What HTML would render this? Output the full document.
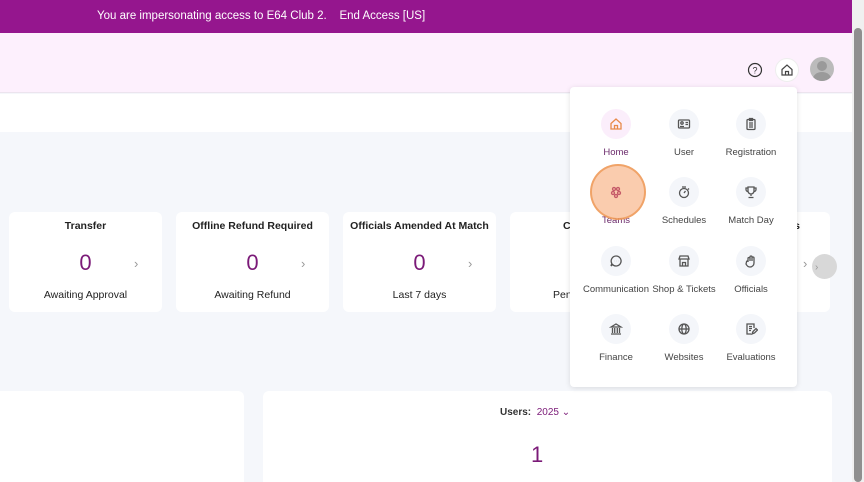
<!DOCTYPE html>
<html><head><meta charset="utf-8"><style>
*{margin:0;padding:0;box-sizing:border-box}
html,body{width:864px;height:482px;overflow:hidden}
body{background:#f5f7fb;font-family:"Liberation Sans",sans-serif;position:relative}
.top{position:absolute;left:0;top:0;width:852px;height:33px;background:#95168e;color:#fff;font-size:11.5px;line-height:33px}
.top span{position:absolute;left:97px;top:0}
.hdr{position:absolute;left:0;top:33px;width:852px;height:60px;background:#fdf0fd;border-bottom:1px solid #ece4ee}
.strip{position:absolute;left:0;top:94px;width:852px;height:38px;background:#fff}
.sb{position:absolute;left:852px;top:0;width:12px;height:482px;background:#f0f0f0}
.sb i{position:absolute;left:2px;top:28px;width:8px;height:454px;background:#8f8f8f;border-radius:4px}
.card{position:absolute;top:212px;height:100px;background:#fff;border-radius:6px;text-align:center}
.card .t{position:absolute;top:8px;width:100%;font-size:10.5px;font-weight:bold;color:#222}
.card .n{position:absolute;top:38px;width:100%;font-size:22px;color:#7b1a78}
.card .s{position:absolute;top:77px;width:100%;font-size:10.5px;color:#222}
.card .c{position:absolute;top:44px;left:125px;color:#999;font-size:13px}
.bc{position:absolute;top:391px;height:100px;background:#fff;border-radius:6px}
.dd{position:absolute;left:570px;top:87px;width:227px;height:300px;background:#fff;border-radius:4px;box-shadow:0 1px 6px rgba(0,0,0,.12)}
.it{position:absolute;width:76px;text-align:center;font-size:9.5px;color:#444}
.it .ic{width:30px;height:30px;border-radius:50%;background:#f4f6fa;margin:0 auto 8px;display:flex;align-items:center;justify-content:center}
.it svg{width:14px;height:14px;fill:none;stroke:#555;stroke-width:1.3}
</style></head><body>
<div class="top"><span>You are impersonating access to E64 Club 2.&nbsp;&nbsp;&nbsp;&nbsp;End Access [US]</span></div>
<div class="hdr">
<svg style="position:absolute;left:747px;top:29px" width="16" height="16" viewBox="0 0 16 16"><circle cx="8" cy="8" r="6.5" fill="none" stroke="#333" stroke-width="1.2"/><text x="8" y="11.5" font-size="9" text-anchor="middle" fill="#333" font-family="Liberation Sans">?</text></svg>
<div style="position:absolute;left:775px;top:25px;width:24px;height:24px;border-radius:50%;background:#fff;border:1px solid #eee"></div>
<svg style="position:absolute;left:780px;top:30px" width="14" height="14" viewBox="0 0 14 14"><path d="M2 6.5L7 2l5 4.5V12H2z M5.5 12V8.5h3V12" fill="none" stroke="#444" stroke-width="1.2"/></svg>
<div style="position:absolute;left:810px;top:24px;width:24px;height:24px;border-radius:50%;background:#bbb;overflow:hidden"><div style="position:absolute;left:7px;top:4px;width:10px;height:10px;border-radius:50%;background:#9a9a9a"></div><div style="position:absolute;left:3px;top:15px;width:18px;height:14px;border-radius:50%;background:#9a9a9a"></div></div>
</div>
<div class="strip"></div>
<div class="card" style="left:9px;width:153px"><div class="t">Transfer</div><div class="n">0</div><div class="c">›</div><div class="s">Awaiting Approval</div></div>
<div class="card" style="left:176px;width:153px"><div class="t">Offline Refund Required</div><div class="n">0</div><div class="c">›</div><div class="s">Awaiting Refund</div></div>
<div class="card" style="left:343px;width:153px"><div class="t">Officials Amended At Match</div><div class="n">0</div><div class="c">›</div><div class="s">Last 7 days</div></div>
<div class="card" style="left:510px;width:320px"><div class="t" style="text-align:left;left:53px">C</div><div class="s" style="text-align:left;left:43px">Pen</div><div class="c" style="left:293px">›</div><div class="t" style="left:282px;width:10px">s</div></div>
<div style="position:absolute;left:812px;top:254px;width:25px;height:25px;border-radius:50%;background:#d8d8d8;color:#999;font-size:10px;line-height:27px;padding-left:3px">›</div>
<div class="bc" style="left:-10px;width:254px"></div>
<div class="bc" style="left:263px;width:569px"><div style="position:absolute;left:237px;top:16px;font-size:10px;color:#333"><b>Users:</b>&nbsp; <span style="color:#7b1a78">2025 ⌄</span></div><div style="position:absolute;left:268px;top:51px;font-size:22px;color:#7b1a78">1</div></div>
<div class="dd">
<div class="it" style="left:8px;top:22px"><div class="ic" style="background:#fbeefb"><svg viewBox="0 0 14 14" style="stroke:#e88a4a"><path d="M2 6.5L7 2l5 4.5V12H2z M5.5 12V8.5h3V12"/></svg></div><span style="color:#6b2a6b">Home</span></div>
<div class="it" style="left:76px;top:22px"><div class="ic"><svg viewBox="0 0 14 14"><rect x="1.5" y="3" width="11" height="8" rx="1"/><circle cx="5" cy="6" r="1.2"/><path d="M3 9.5h4M8.5 5.5h2.5M8.5 7.5h2.5"/></svg></div>User</div>
<div class="it" style="left:143px;top:22px"><div class="ic"><svg viewBox="0 0 14 14"><rect x="3" y="2.5" width="8" height="10" rx="1"/><path d="M5.5 1.5h3v2h-3zM5 6h4M5 8h4M5 10h4"/></svg></div>Registration</div>
<div class="it" style="left:8px;top:90px"><div class="ic" style="background:transparent"><svg viewBox="0 0 14 14" style="stroke:#c45a6a"><circle cx="5" cy="4" r="1.5"/><circle cx="9" cy="4" r="1.5"/><circle cx="4" cy="8" r="1.5"/><circle cx="10" cy="8" r="1.5"/><circle cx="7" cy="11" r="1.5"/></svg></div><span style="color:#6b2a6b">Teams</span></div>
<div class="it" style="left:76px;top:90px"><div class="ic"><svg viewBox="0 0 14 14"><circle cx="7" cy="8" r="4.5"/><path d="M7 8L8.5 6M5 2h4M11 3.5l1 1"/></svg></div>Schedules</div>
<div class="it" style="left:143px;top:90px"><div class="ic"><svg viewBox="0 0 14 14"><path d="M4 2h6v4a3 3 0 01-6 0zM4 3H2v1.5a2 2 0 002 2M10 3h2v1.5a2 2 0 01-2 2M7 9v2M4.5 12.5h5"/></svg></div>Match Day</div>
<div class="it" style="left:6px;top:159px;width:80px"><div class="ic"><svg viewBox="0 0 14 14"><path d="M7 2a5 5 0 11-3.5 8.5L2 12l.8-2.6A5 5 0 017 2z"/><path d="M5 7h.1M7 7h.1M9 7h.1"/></svg></div>Communication</div>
<div class="it" style="left:74px;top:159px;width:80px"><div class="ic"><svg viewBox="0 0 14 14"><path d="M2 5l1-3h8l1 3zM2 5h10M3 5v7h8V5M5.5 12V8.5h3V12"/></svg></div>Shop &amp; Tickets</div>
<div class="it" style="left:143px;top:159px"><div class="ic"><svg viewBox="0 0 14 14"><path d="M4 8V4.5a1 1 0 012 0V7V3a1 1 0 012 0v4V4a1 1 0 012 0v5a4 4 0 01-4 4c-2 0-3-1-4-3L2.5 8a1 1 0 011.5-1"/></svg></div>Officials</div>
<div class="it" style="left:8px;top:227px"><div class="ic"><svg viewBox="0 0 14 14"><path d="M2 5l5-3 5 3zM2 12h10M3.5 6v5M5.7 6v5M8.3 6v5M10.5 6v5"/></svg></div>Finance</div>
<div class="it" style="left:76px;top:227px"><div class="ic"><svg viewBox="0 0 14 14"><circle cx="7" cy="7" r="5"/><ellipse cx="7" cy="7" rx="2.2" ry="5"/><path d="M2 7h10"/></svg></div>Websites</div>
<div class="it" style="left:143px;top:227px"><div class="ic"><svg viewBox="0 0 14 14"><path d="M10 6V2H3v10h4M5 4.5h3M5 6.5h3M5 8.5h2M8 12l1-2.5 3-3 1.5 1.5-3 3z"/></svg></div>Evaluations</div>
</div>
<div style="position:absolute;left:590px;top:164px;width:56px;height:56px;border-radius:50%;background:rgba(247,170,120,.6);border:2px solid rgba(236,150,80,.75)"></div>
<svg style="position:absolute;left:609px;top:185px" width="14" height="14" viewBox="0 0 14 14" fill="none" stroke="#c45a6a" stroke-width="1.2"><circle cx="5" cy="4" r="1.5"/><circle cx="9" cy="4" r="1.5"/><circle cx="4" cy="8" r="1.5"/><circle cx="10" cy="8" r="1.5"/><circle cx="7" cy="11" r="1.5"/></svg>
<div class="sb"><i></i></div>
</body></html>
